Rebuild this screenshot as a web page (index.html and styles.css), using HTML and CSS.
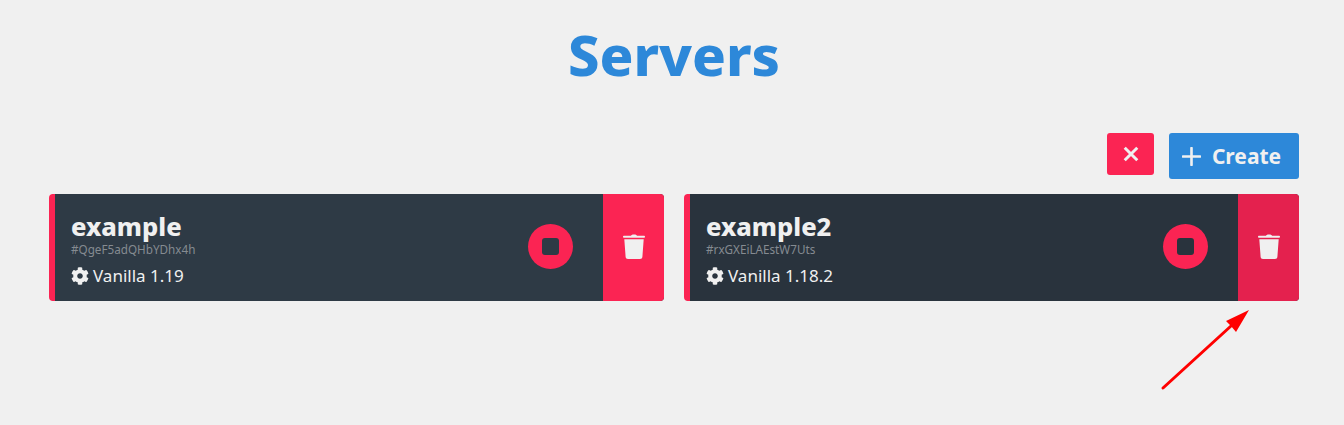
FILE: index.html
```html
<!DOCTYPE html>
<html lang="en">
<head>
  <meta charset="UTF-8">
  <meta name="viewport" content="width=device-width, initial-scale=1.0">
  <title>Servers</title>
  <link rel="stylesheet" href="styles.css">
</head>
<body>
  <div class="container">
    <h1>Servers</h1>

    <div class="toolbar">
      <button class="btn btn-cancel" aria-label="Cancel">
        <svg class="icon-x" viewBox="0 0 14 14"><path d="M1.500 1.500l11 11M12.500 1.500l-11 11"/></svg>
      </button>
      <button class="btn btn-create">
        <svg class="icon-plus" viewBox="0 0 19 19"><path d="M9.500 1v17M1 9.500h17"/></svg>
        Create
      </button>
    </div>

    <div class="server-list">
      <div class="server-card">
        <div class="server-info">
          <div class="server-name">example</div>
          <div class="server-id">#QgeF5adQHbYDhx4h</div>
          <div class="server-type">
            <svg class="icon-cog" viewBox="0 0 512 512"><path d="M487.4 315.7l-42.6-24.6c4.3-23.2 4.3-47 0-70.2l42.6-24.6c4.9-2.8 7.1-8.6 5.5-14-11.1-35.6-30-67.8-54.7-94.6-3.8-4.1-10-5.1-14.8-2.3L380.8 110c-17.9-15.4-38.5-27.3-60.8-35.1V25.8c0-5.6-3.9-10.5-9.4-11.7-36.7-8.2-74.3-7.8-109.2 0-5.5 1.2-9.4 6.1-9.4 11.7V75c-22.2 7.9-42.8 19.8-60.8 35.1L88.7 85.5c-4.9-2.8-11-1.9-14.8 2.3-24.7 26.7-43.6 58.9-54.7 94.6-1.7 5.4.6 11.2 5.5 14L67.3 221c-4.3 23.2-4.3 47 0 70.2l-42.6 24.6c-4.9 2.8-7.1 8.6-5.5 14 11.1 35.6 30 67.8 54.7 94.6 3.8 4.1 10 5.1 14.8 2.3l42.6-24.6c17.9 15.4 38.5 27.3 60.8 35.1v49.2c0 5.6 3.9 10.5 9.4 11.7 36.7 8.2 74.3 7.8 109.2 0 5.5-1.2 9.4-6.1 9.4-11.7v-49.2c22.2-7.9 42.8-19.8 60.8-35.1l42.6 24.6c4.9 2.8 11 1.9 14.8-2.3 24.7-26.7 43.6-58.9 54.7-94.6 1.5-5.5-.7-11.3-5.6-14.1zM256 336c-44.1 0-80-35.9-80-80s35.9-80 80-80 80 35.9 80 80-35.9 80-80 80z"/></svg>
            Vanilla 1.19
          </div>
        </div>
        <button class="stop-btn" aria-label="Stop"><span class="stop-square"></span></button>
        <button class="delete-btn" aria-label="Delete">
          <svg class="icon-trash" viewBox="0 0 22 25"><path d="M8 1.800C8.300 .8 9.500 .4 11 .4s2.700.4 3 1.400h6.800c.7 0 1.200.4 1.200 1s-.5 1-1.200 1H1.200C.5 3.800 0 3.400 0 2.800s.5-1 1.200-1zM1.300 5.200h19.400l-1.300 17.500c-.1 1.300-1 2.300-2.400 2.300H5c-1.400 0-2.300-1-2.400-2.300z"/></svg>
        </button>
      </div>

      <div class="server-card hovered">
        <div class="server-info">
          <div class="server-name">example2</div>
          <div class="server-id">#rxGXEiLAEstW7Uts</div>
          <div class="server-type">
            <svg class="icon-cog" viewBox="0 0 512 512"><path d="M487.4 315.7l-42.6-24.6c4.3-23.2 4.3-47 0-70.2l42.6-24.6c4.9-2.8 7.1-8.6 5.5-14-11.1-35.6-30-67.8-54.7-94.6-3.8-4.1-10-5.1-14.8-2.3L380.8 110c-17.9-15.4-38.5-27.3-60.8-35.1V25.8c0-5.6-3.9-10.5-9.4-11.7-36.7-8.2-74.3-7.8-109.2 0-5.5 1.2-9.4 6.1-9.4 11.7V75c-22.2 7.9-42.8 19.8-60.8 35.1L88.7 85.5c-4.9-2.8-11-1.9-14.8 2.3-24.7 26.7-43.6 58.9-54.7 94.6-1.7 5.4.6 11.2 5.5 14L67.3 221c-4.3 23.2-4.3 47 0 70.2l-42.6 24.6c-4.9 2.8-7.1 8.6-5.5 14 11.1 35.6 30 67.8 54.7 94.6 3.8 4.1 10 5.1 14.8 2.3l42.6-24.6c17.9 15.4 38.5 27.3 60.8 35.1v49.2c0 5.6 3.9 10.5 9.4 11.7 36.7 8.2 74.3 7.8 109.2 0 5.5-1.2 9.4-6.1 9.4-11.7v-49.2c22.2-7.9 42.8-19.8 60.8-35.1l42.6 24.6c4.9 2.8 11 1.9 14.8-2.3 24.7-26.7 43.6-58.9 54.7-94.6 1.5-5.5-.7-11.3-5.6-14.1zM256 336c-44.1 0-80-35.9-80-80s35.9-80 80-80 80 35.9 80 80-35.9 80-80 80z"/></svg>
            Vanilla 1.18.2
          </div>
        </div>
        <button class="stop-btn" aria-label="Stop"><span class="stop-square"></span></button>
        <button class="delete-btn" aria-label="Delete">
          <svg class="icon-trash" viewBox="0 0 22 25"><path d="M8 1.800C8.300 .8 9.500 .4 11 .4s2.700.4 3 1.400h6.800c.7 0 1.200.4 1.200 1s-.5 1-1.200 1H1.200C.5 3.800 0 3.400 0 2.800s.5-1 1.200-1zM1.300 5.200h19.400l-1.300 17.500c-.1 1.300-1 2.300-2.400 2.300H5c-1.400 0-2.300-1-2.400-2.300z"/></svg>
        </button>
      </div>
    </div>
  </div>

  <!-- annotation drawn over the screenshot -->
  <svg class="arrow" viewBox="0 0 100 90">
    <path class="arrow-line" d="M6 83L74 21"/>
    <path class="arrow-head" d="M92 5L79 27 74 21 69 16z"/>
  </svg>
</body>
</html>
```

FILE: styles.css
```css
body {
  font-family: "Noto Sans", sans-serif;
  margin: 0;
  padding: 0;
  background-color: #f0f0f0;
  height: 425px;
  overflow: hidden;
}

.container {
  padding: 0 45px 0 49px;
}

h1 {
  margin: 0;
  padding-top: 15px;
  height: 133px;
  box-sizing: border-box;
  text-align: center;
  font-size: 56px;
  line-height: 78px;
  font-weight: 800;
  color: #2d88d9;
}

.toolbar {
  display: flex;
  justify-content: flex-end;
  align-items: flex-start;
  gap: 15px;
  margin-bottom: 15px;
}

.btn {
  display: flex;
  align-items: center;
  justify-content: center;
  border: none;
  border-radius: 3px;
  padding: 0;
  color: #f0f0f0;
  font-family: inherit;
  cursor: pointer;
}

.btn-cancel {
  width: 47px;
  height: 42px;
  background-color: #fb2453;
}

.btn-create {
  box-sizing: border-box;
  width: 130px;
  height: 46px;
  gap: 11px;
  padding-right: 5px;
  background-color: #2d88d9;
  font-size: 21px;
  font-weight: 700;
}

.icon-x {
  width: 16px;
  height: 16px;
  fill: none;
  stroke: #f0f0f0;
  stroke-width: 2.6;
}

.icon-plus {
  width: 19px;
  height: 19px;
  fill: none;
  stroke: #f0f0f0;
  stroke-width: 2.6;
  stroke-linecap: round;
}

.server-list {
  display: grid;
  grid-template-columns: 1fr 1fr;
  gap: 20px;
}

.server-card {
  display: flex;
  align-items: stretch;
  height: 107px;
  background-color: #2e3a45;
  border-left: 6px solid #fb2453;
  border-radius: 4px;
  overflow: hidden;
}

.server-card.hovered {
  background-color: #29333d;
}

.server-info {
  flex: 1;
  padding: 16px 0 0 16px;
  color: #f0f0f0;
}

.server-name {
  font-size: 25.5px;
  line-height: 32px;
  font-weight: 800;
}

.server-id {
  font-size: 11.7px;
  line-height: 14px;
  color: #858b91;
}

.server-type {
  display: flex;
  align-items: center;
  gap: 4px;
  margin-top: 9px;
  font-size: 17px;
  line-height: 22px;
}

.icon-cog {
  width: 18px;
  height: 18px;
  fill: #f0f0f0;
}

.stop-btn {
  align-self: center;
  display: flex;
  align-items: center;
  justify-content: center;
  width: 45px;
  height: 45px;
  margin: 0 30px 2px 0;
  padding: 0;
  border: none;
  border-radius: 50%;
  background-color: #fb2453;
  cursor: pointer;
}

.stop-square {
  width: 17px;
  height: 17px;
  border-radius: 3px;
  background-color: #2e3a45;
}

.hovered .stop-square {
  background-color: #29333d;
}

.delete-btn {
  display: flex;
  align-items: center;
  justify-content: center;
  width: 61px;
  padding: 0 0 2px;
  border: none;
  background-color: #fb2453;
  cursor: pointer;
}

.hovered .delete-btn {
  background-color: #e4214e;
}

.icon-trash {
  width: 22px;
  height: 25px;
  fill: #f0f0f0;
}

.arrow {
  position: absolute;
  left: 1157px;
  top: 305px;
  width: 100px;
  height: 90px;
}

.arrow-line {
  fill: none;
  stroke: #ff0000;
  stroke-width: 3;
  stroke-linecap: round;
}

.arrow-head {
  fill: #ff0000;
}
```
